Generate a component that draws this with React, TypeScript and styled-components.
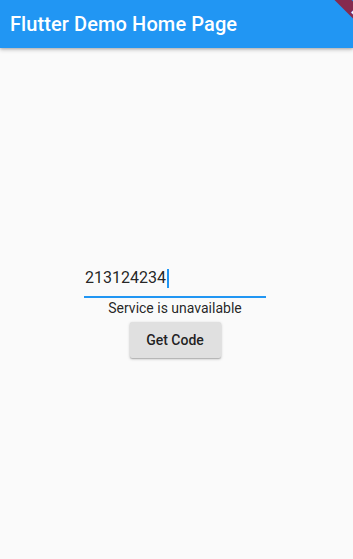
import styled, { createGlobalStyle } from 'styled-components';

const GlobalStyle = createGlobalStyle`
  html, body {
    margin: 0;
    padding: 0;
    background: #fafafa;
  }
  * {
    box-sizing: border-box;
  }
`;

function App() {
  return (
    <Screen>
      <GlobalStyle />
      <AppBar>
        <Title>Flutter Demo Home Page</Title>
      </AppBar>

      <Body>
        <Form>
          <Field>
            <InputText>213124234</InputText>
            <Caret />
          </Field>
          <Helper>Service is unavailable</Helper>
          <Button>Get Code</Button>
        </Form>
      </Body>

      <DebugRibbon>DEBUG</DebugRibbon>
    </Screen>
  );
}

export default App;

const Screen = styled.div`
  position: relative;
  width: 353px;
  height: 559px;
  overflow: hidden;
  display: flex;
  flex-direction: column;
  background: #fafafa;
  font-family: Roboto, 'Liberation Sans', sans-serif;
`;

const AppBar = styled.header`
  height: 48px;
  flex-shrink: 0;
  display: flex;
  align-items: center;
  padding-left: 10px;
  background: #2196f3;
  box-shadow: 0 2px 4px rgba(0, 0, 0, 0.2), 0 1px 2px rgba(0, 0, 0, 0.14);
  position: relative;
  z-index: 1;
`;

const Title = styled.h1`
  margin: 0;
  font-size: 20px;
  font-weight: 500;
  color: #fff;
  letter-spacing: 0.1px;
`;

const Body = styled.main`
  flex: 1;
  display: flex;
  align-items: center;
  justify-content: center;
  padding: 9px 3px 0 0;
`;

const Form = styled.div`
  display: flex;
  flex-direction: column;
  align-items: center;
`;

const Field = styled.div`
  width: 182px;
  display: flex;
  align-items: center;
  padding: 8px 0 6px 1px;
  border-bottom: 2px solid #2196f3;
`;

const InputText = styled.span`
  font-size: 16px;
  line-height: 24px;
  color: rgba(0, 0, 0, 0.87);
`;

const Caret = styled.span`
  width: 2px;
  height: 19px;
  margin-left: 1px;
  background: #2196f3;
`;

const Helper = styled.div`
  font-size: 14px;
  line-height: 20px;
  color: rgba(0, 0, 0, 0.87);
`;

const Button = styled.button`
  margin-top: 4px;
  width: 91px;
  height: 36px;
  border: none;
  border-radius: 2px;
  background: #e0e0e0;
  font-family: Roboto, 'Liberation Sans', sans-serif;
  font-size: 14px;
  font-weight: 500;
  color: rgba(0, 0, 0, 0.87);
  box-shadow: 0 1px 3px rgba(0, 0, 0, 0.25), 0 1px 1px rgba(0, 0, 0, 0.14);
  cursor: pointer;
`;

const DebugRibbon = styled.div`
  position: absolute;
  left: 306px;
  top: 17px;
  width: 120px;
  height: 12px;
  transform: rotate(45deg);
  background: rgb(134, 42, 78);
  color: #fff;
  font-size: 10px;
  font-weight: 700;
  line-height: 12px;
  text-align: center;
  letter-spacing: 1px;
  z-index: 2;
`;
